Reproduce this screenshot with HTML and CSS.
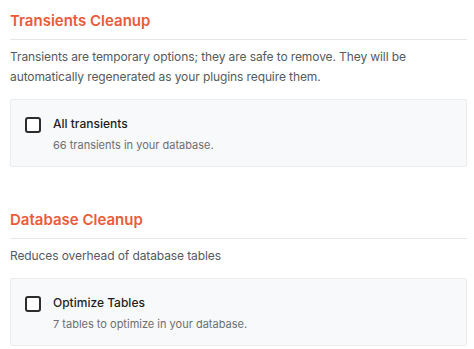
FILE: index.html
```html
<!DOCTYPE html>
<html lang="en">
<head>
    <meta charset="UTF-8">
    <meta name="viewport" content="width=device-width, initial-scale=1.0">
    <title>Cleanup</title>
    <link rel="stylesheet" href="styles.css">
</head>
<body>
    <!-- Transients -->
    <section class="cleanup-section">
        <h2 class="section-title">Transients Cleanup</h2>
        <p class="section-desc">Transients are temporary options; they are safe to remove. They will be automatically regenerated as your plugins require them.</p>
        <label class="option-box">
            <input type="checkbox" class="option-check">
            <span class="option-text">
                <span class="option-label">All transients</span>
                <span class="option-sub">66 transients in your database.</span>
            </span>
        </label>
    </section>

    <!-- Database -->
    <section class="cleanup-section">
        <h2 class="section-title">Database Cleanup</h2>
        <p class="section-desc">Reduces overhead of database tables</p>
        <label class="option-box">
            <input type="checkbox" class="option-check">
            <span class="option-text">
                <span class="option-label">Optimize Tables</span>
                <span class="option-sub">7 tables to optimize in your database.</span>
            </span>
        </label>
    </section>
</body>
</html>
```

FILE: styles.css
```css
/* --- Page --- */
body {
    margin: 0;
    padding: 11px 7px 0 10px;
    font-family: Inter, "Noto Sans", sans-serif;
    background: #fff;
    color: #1e1e1e;
}

/* --- Sections --- */
.cleanup-section {
    margin-bottom: 43px;
}

.cleanup-section:last-child {
    margin-bottom: 0;
}

.section-title {
    margin: 0;
    padding-bottom: 8px;
    border-bottom: 1px solid #e6e6e6;
    font-size: 15px;
    line-height: 20px;
    font-weight: 600;
    color: #ea5b3a;
}

.section-desc {
    margin: 7px 0 12px;
    font-size: 12px;
    line-height: 20px;
    letter-spacing: -0.1px;
    color: #555a60;
}

/* --- Option box --- */
.option-box {
    display: flex;
    align-items: flex-start;
    gap: 12px;
    padding: 15px 14px 12px;
    background: #f8f9fa;
    border: 1px solid #ebecee;
    border-radius: 2px;
    cursor: pointer;
}

.option-check {
    appearance: none;
    flex: none;
    width: 16px;
    height: 16px;
    margin: 2px 0 0;
    border: 2px solid #2c2c2c;
    border-radius: 3px;
    background: #fff;
    cursor: pointer;
}

.option-text {
    display: flex;
    flex-direction: column;
    gap: 3px;
}

.option-label {
    font-size: 12px;
    line-height: 18px;
    font-weight: 500;
    color: #1e1e1e;
}

.option-sub {
    font-size: 11px;
    line-height: 18px;
    color: #6b6e73;
}
```
